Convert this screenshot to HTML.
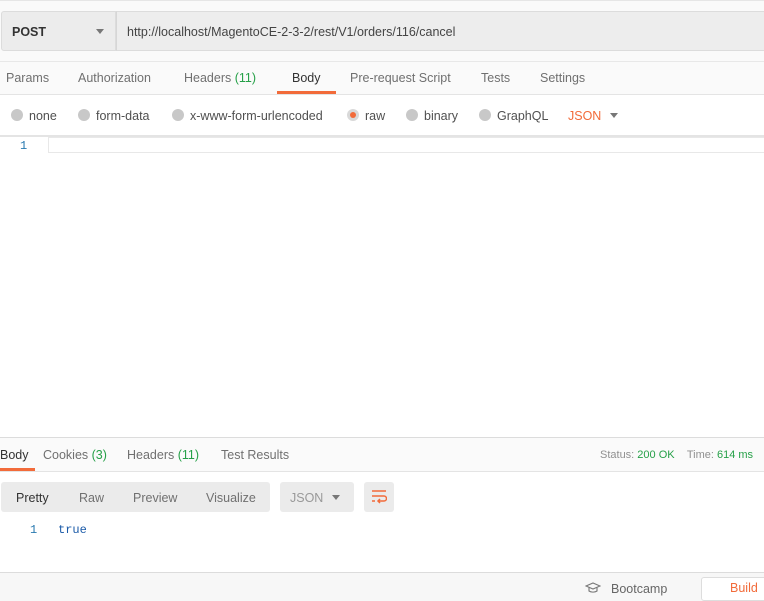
<!DOCTYPE html><html><head><style>
*{margin:0;padding:0;box-sizing:border-box}
body{width:764px;height:601px;overflow:hidden;background:#fff;font-family:"Liberation Sans",sans-serif;font-size:12.5px;color:#505050;position:relative}
.a{position:absolute;white-space:nowrap}
.g{color:#26a048}
.rad{position:absolute;width:12px;height:12px;border-radius:50%;background:#c8c8c8;top:109px}
</style></head><body>
<div class="a" style="left:0;top:0;width:764px;height:61px;background:#fafafa;border-top:1px solid #e6e6e6"></div>
<div class="a" style="left:1px;top:11px;width:115px;height:40px;background:#ececec;border:1px solid #dcdcdc;border-radius:3px 0 0 3px"></div>
<div class="a" style="left:12px;top:25px;font-weight:bold;color:#333;font-size:12.5px">POST</div>
<div class="a" style="left:96px;top:29px;border-left:4px solid transparent;border-right:4px solid transparent;border-top:5px solid #777"></div>
<div class="a" style="left:116px;top:11px;width:650px;height:40px;background:#ededed;border:1px solid #dcdcdc;border-left:1px solid #d6d6d6"></div>
<div class="a" style="left:127px;top:25px;color:#444">http://localhost/MagentoCE-2-3-2/rest/V1/orders/116/cancel</div>
<div class="a" style="left:0;top:61px;width:764px;height:34px;background:#fafafa;border-top:1px solid #e8e8e8;border-bottom:1px solid #e4e4e4"></div>
<div class="a" style="left:6px;top:71px;color:#707070">Params</div>
<div class="a" style="left:78px;top:71px;color:#707070">Authorization</div>
<div class="a" style="left:184px;top:71px;color:#707070">Headers <span class="g">(11)</span></div>
<div class="a" style="left:292px;top:71px;color:#333">Body</div>
<div class="a" style="left:277px;top:91px;width:59px;height:3px;background:#f26b3a"></div>
<div class="a" style="left:350px;top:71px;color:#707070">Pre-request Script</div>
<div class="a" style="left:481px;top:71px;color:#707070">Tests</div>
<div class="a" style="left:540px;top:71px;color:#707070">Settings</div>
<div class="rad" style="left:11px"></div><div class="a" style="left:29px;top:109px">none</div>
<div class="rad" style="left:78px"></div><div class="a" style="left:96px;top:109px">form-data</div>
<div class="rad" style="left:172px"></div><div class="a" style="left:190px;top:109px">x-www-form-urlencoded</div>
<div class="rad" style="left:347px;background:#d9d9d9"></div><div class="a" style="left:350px;top:112px;width:6px;height:6px;border-radius:50%;background:#f26b3a"></div><div class="a" style="left:365px;top:109px">raw</div>
<div class="rad" style="left:406px"></div><div class="a" style="left:424px;top:109px">binary</div>
<div class="rad" style="left:479px"></div><div class="a" style="left:497px;top:109px">GraphQL</div>
<div class="a" style="left:568px;top:109px;color:#f26b3a">JSON</div>
<div class="a" style="left:610px;top:113px;border-left:4px solid transparent;border-right:4px solid transparent;border-top:5px solid #777"></div>
<div class="a" style="left:0;top:135px;width:764px;height:2px;background:#e4e4e4"></div>
<div class="a" style="left:20px;top:139px;color:#2a7ab0;font-family:'Liberation Mono',monospace;font-size:12px">1</div>
<div class="a" style="left:48px;top:137px;width:720px;height:16px;border:1px solid #e8e8e8"></div>
<div class="a" style="left:0;top:437px;width:764px;height:35px;background:#fafafa;border-top:1px solid #dcdcdc;border-bottom:1px solid #e4e4e4"></div>
<div class="a" style="left:0;top:448px;color:#333">Body</div>
<div class="a" style="left:0;top:468px;width:35px;height:3px;background:#f26b3a"></div>
<div class="a" style="left:43px;top:448px;color:#707070">Cookies <span class="g">(3)</span></div>
<div class="a" style="left:127px;top:448px;color:#707070">Headers <span class="g">(11)</span></div>
<div class="a" style="left:221px;top:448px;color:#707070">Test Results</div>
<div class="a" style="left:600px;top:449px;font-size:11px;color:#909090">Status: <span class="g">200 OK</span>&nbsp;&nbsp;&nbsp;&nbsp;Time: <span class="g">614 ms</span></div>
<div class="a" style="left:1px;top:482px;width:269px;height:30px;background:#ebebeb;border-radius:3px"></div>
<div class="a" style="left:16px;top:491px;color:#333">Pretty</div>
<div class="a" style="left:79px;top:491px;color:#707070">Raw</div>
<div class="a" style="left:133px;top:491px;color:#707070">Preview</div>
<div class="a" style="left:206px;top:491px;color:#707070">Visualize</div>
<div class="a" style="left:280px;top:482px;width:74px;height:30px;background:#ebebeb;border-radius:3px"></div>
<div class="a" style="left:290px;top:491px;color:#999">JSON</div>
<div class="a" style="left:332px;top:495px;border-left:4px solid transparent;border-right:4px solid transparent;border-top:5px solid #777"></div>
<div class="a" style="left:364px;top:482px;width:30px;height:30px;background:#ebebeb;border-radius:3px"></div>
<svg class="a" style="left:371px;top:489px" width="16" height="16" viewBox="0 0 16 16" fill="none" stroke="#f26b3a" stroke-width="1.5"><path d="M1 2h14M1 7h12a2.5 2.5 0 0 1 0 5H7M9 10l-2 2 2 2M1 12h3"/></svg>
<div class="a" style="left:30px;top:523px;color:#2a7ab0;font-family:'Liberation Mono',monospace;font-size:12px">1</div>
<div class="a" style="left:58px;top:523px;color:#1a5aa8;font-family:'Liberation Mono',monospace;font-size:12px">true</div>
<div class="a" style="left:0;top:572px;width:764px;height:29px;background:#f7f7f7;border-top:1px solid #dcdcdc"></div>
<svg class="a" style="left:585px;top:582px" width="16" height="12" viewBox="0 0 16 12" fill="none" stroke="#777" stroke-width="1.1"><path d="M1 4l7-3 7 3-7 3z M4 5.5v3.5c2 1.5 6 1.5 8 0V5.5"/></svg>
<div class="a" style="left:611px;top:582px;color:#666">Bootcamp</div>
<div class="a" style="left:701px;top:577px;width:70px;height:24px;background:#fff;border:1px solid #ddd;border-radius:3px"></div>
<div class="a" style="left:730px;top:581px;color:#f26b3a">Build</div>
</body></html>
